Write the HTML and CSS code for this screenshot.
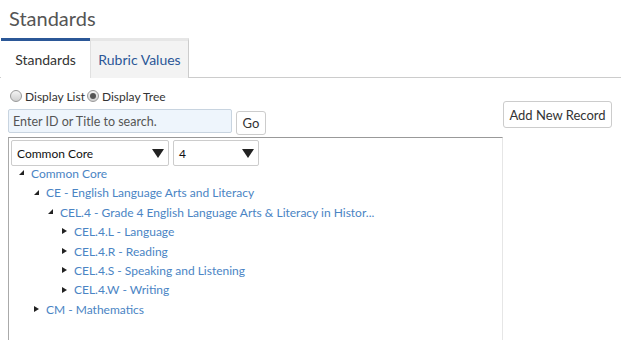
FILE: index.html
```html
<!DOCTYPE html>
<html lang="en">
<head>
  <meta charset="UTF-8">
  <title>Standards</title>
  <link rel="stylesheet" href="styles.css">
</head>
<body>
  <h1 class="page-title">Standards</h1>

  <!-- Onglets -->
  <div class="tabs">
    <div class="tab active">Standards</div>
    <div class="tab">Rubric Values</div>
  </div>

  <main>
    <div class="left-col">
      <div class="display-row">
        <label><input type="radio" name="display"> Display List</label>
        <label><input type="radio" name="display" checked> Display Tree</label>
      </div>

      <div class="search-row">
        <input type="text" class="search-input" placeholder="Enter ID or Title to search.">
        <button class="btn go-btn">Go</button>
      </div>

      <div class="tree-panel">
        <div class="select-row">
          <div class="fake-select wide"><span>Common Core</span><span class="caret"></span></div>
          <div class="fake-select narrow"><span>4</span><span class="caret"></span></div>
        </div>

        <ul class="tree">
          <li class="node open lvl0"><span class="toggle"></span><a>Common Core</a></li>
          <li class="node open lvl1"><span class="toggle"></span><a>CE - English Language Arts and Literacy</a></li>
          <li class="node open lvl2"><span class="toggle"></span><a>CEL.4 - Grade 4 English Language Arts &amp; Literacy in Histor...</a></li>
          <li class="node closed lvl3"><span class="toggle"></span><a>CEL.4.L - Language</a></li>
          <li class="node closed lvl3"><span class="toggle"></span><a>CEL.4.R - Reading</a></li>
          <li class="node closed lvl3"><span class="toggle"></span><a>CEL.4.S - Speaking and Listening</a></li>
          <li class="node closed lvl3"><span class="toggle"></span><a>CEL.4.W - Writing</a></li>
          <li class="node closed lvl1"><span class="toggle"></span><a>CM - Mathematics</a></li>
        </ul>
      </div>
    </div>

    <div class="right-col">
      <button class="btn add-btn">Add New Record</button>
    </div>
  </main>
</body>
</html>
```

FILE: styles.css
```css
:root {
  --text-color: #333333;
  --title-color: #555555;
  --tab-blue: #2b5797;
  --link-color: #4a84c4;
  --border-color: #cccccc;
}

* {
  box-sizing: border-box;
}

body {
  margin: 0;
  font-family: Lato, "Open Sans", Arial, sans-serif;
  font-size: 13px;
  color: var(--text-color);
  background: #fff;
}

.page-title {
  margin: 0;
  padding: 6px 9px 0;
  height: 38px;
  font-size: 20px;
  font-weight: normal;
  color: var(--title-color);
}

/* ---------- Onglets ---------- */
.tabs {
  display: flex;
  padding-left: 1px;
  border-bottom: 1px solid var(--border-color);
  height: 40px;
}

.tab {
  height: 40px;
  display: flex;
  align-items: center;
  justify-content: center;
  font-size: 14px;
}

.tab.active {
  width: 89px;
  border-top: 3px solid var(--tab-blue);
  background: #fff;
  color: #333;
  margin-bottom: -1px;
  padding-bottom: 1px;
}

.tab:not(.active) {
  width: 99px;
  background: #f3f3f3;
  border-top: 3px solid #e6e6e6;
  border-right: 1px solid var(--border-color);
  border-left: 1px solid #e0e0e0;
  color: var(--tab-blue);
}

/* ---------- Contenu ---------- */
main {
  display: flex;
  padding-left: 8px;
}

.left-col {
  width: 495px;
  display: flex;
  flex-direction: column;
}

.right-col {
  padding-top: 23px;
}

.display-row {
  display: flex;
  align-items: center;
  height: 31px;
  padding-top: 5px;
  font-size: 12px;
}

.display-row label {
  display: flex;
  align-items: center;
}

/* radios gris façon ancien navigateur */
.display-row input[type="radio"] {
  -webkit-appearance: none;
  appearance: none;
  margin: 0 3px 0 2px;
  width: 12px;
  height: 12px;
  border: 1px solid #999;
  border-radius: 50%;
  background: linear-gradient(#f4f4f4, #cfcfcf);
  position: relative;
}
.display-row input[type="radio"]:checked::after {
  content: "";
  position: absolute;
  left: 2px;
  top: 2px;
  width: 6px;
  height: 6px;
  border-radius: 50%;
  background: #555;
}

.search-row {
  display: flex;
  align-items: flex-start;
  gap: 4px;
}

.search-input {
  width: 224px;
  height: 24px;
  background: #eef5fc;
  border: 1px solid #c8d4e0;
  border-radius: 2px;
  padding: 0 4px;
  font-family: inherit;
  font-size: 12.5px;
  color: #555;
}
.search-input::placeholder {
  color: #555;
}

.btn {
  background: #fff;
  border: 1px solid var(--border-color);
  border-radius: 3px;
  font-family: inherit;
  font-size: 13px;
  color: #333;
  padding: 0;
}

.go-btn {
  margin-top: 2px;
  width: 30px;
  height: 24px;
}

.add-btn {
  width: 109px;
  height: 27px;
}

/* ---------- Arbre ---------- */
.tree-panel {
  margin-top: 2px;
  height: 220px;
  border-top: 1px solid #999;
  border-left: 1px solid #aaa;
  border-right: 1px solid #e6e6e6;
  padding: 2px 2px 0;
}

.select-row {
  display: flex;
  gap: 4px;
}

.fake-select {
  height: 26px;
  display: flex;
  align-items: center;
  justify-content: space-between;
  border: 1px solid var(--border-color);
  border-radius: 2px;
  padding: 0 4px 0 5px;
  font-size: 12px;
  color: #111;
}
.fake-select.wide { width: 158px; }
.fake-select.narrow { width: 86px; }

.caret {
  width: 0;
  height: 0;
  border-left: 6px solid transparent;
  border-right: 6px solid transparent;
  border-top: 9px solid #222;
}

.tree {
  list-style: none;
  margin: -2px 0 0;
  padding: 0;
  font-size: 12px;
}

.node {
  height: 19.4px;
  line-height: 19.4px;
  display: flex;
  align-items: center;
  white-space: nowrap;
}

.node a {
  color: var(--link-color);
}

.toggle {
  width: 13px;
  height: 19px;
  position: relative;
  flex-shrink: 0;
}

.node.open .toggle::before {
  content: "";
  position: absolute;
  left: 1px;
  top: 6px;
  border-bottom: 5px solid #222;
  border-left: 5px solid transparent;
}

.node.closed .toggle::before {
  content: "";
  position: absolute;
  left: 1px;
  top: 6px;
  border-left: 5px solid #222;
  border-top: 3.5px solid transparent;
  border-bottom: 3.5px solid transparent;
}

.lvl0 { padding-left: 7px; }
.lvl1 { padding-left: 22px; }
.lvl2 { padding-left: 36px; }
.lvl3 { padding-left: 50px; }
```
